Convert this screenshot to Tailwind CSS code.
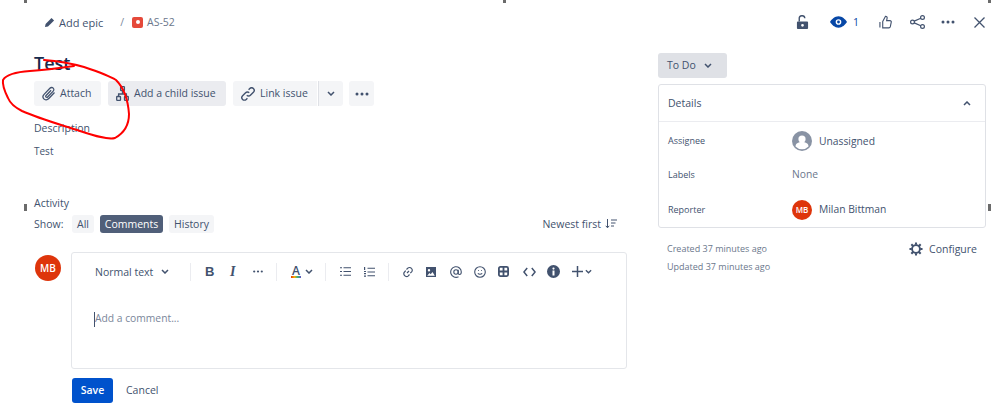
<!DOCTYPE html>
<html lang="en">
  <head>
    <meta charset="UTF-8" />
    <meta name="viewport" content="width=device-width, initial-scale=1.0" />
    <title>AS-52</title>
    <script src="https://cdn.jsdelivr.net/npm/@tailwindcss/browser@4"></script>
  </head>
  <body class="bg-white">
    <div class="relative w-[991px] h-[412px] overflow-hidden bg-white font-['Open_Sans',sans-serif] text-[10.5px] text-[#42526e]">
      <!-- header -->
      <div class="flex items-center h-[44px] pl-[45px] pr-[6px]">
        <svg class="w-[10px] h-[10px] text-[#42526e]" viewBox="0 0 10 10" fill="currentColor"><path d="M0 10l.6-3L6.500 1l2.600 2.500L3 9.400z"/></svg>
        <span class="ml-[4px] pt-[2px] text-[11px] font-medium">Add epic</span>
        <span class="ml-[17px] pt-[2px] text-[#7a869a]">/</span>
        <span class="ml-[8px] flex items-center justify-center w-[11px] h-[11px] rounded-[2px] bg-[#e5493a]"><span class="w-[4px] h-[4px] rounded-full bg-white"></span></span>
        <span class="ml-[4px] pt-[2px] text-[#6b778c]">AS-52</span>
        <div class="ml-auto flex items-center">
          <svg class="w-[13px] h-[15px] mr-[21px] text-[#42526e]" viewBox="0 0 14 16" fill="currentColor"><path d="M2 7h10a1 1 0 0 1 1 1v6a1 1 0 0 1-1 1H2a1 1 0 0 1-1-1V8a1 1 0 0 1 1-1zm5 2.500a1.500 1.500 0 1 0 0 3 1.500 1.500 0 0 0 0-3z" fill-rule="evenodd"/><path d="M3.500 7V4a3 3 0 0 1 6-.6" fill="none" stroke="currentColor" stroke-width="1.500"/></svg>
          <svg class="w-[17px] h-[12px] mr-[6px] text-[#0747a6]" viewBox="0 0 18 12" fill="currentColor"><path fill-rule="evenodd" d="M9 0c4 0 7 3 9 6-2 3-5 6-9 6S2 9 0 6c2-3 5-6 9-6zm0 3a3 3 0 1 0 0 6 3 3 0 0 0 0-6zm0 1.500a1.500 1.500 0 1 1 0 3 1.500 1.500 0 0 1 0-3z"/></svg>
          <span class="w-[26px] pt-[2px] text-[#0747a6]">1</span>
          <svg class="w-[13px] h-[14px] mr-[18px] text-[#42526e]" viewBox="0 0 14 14" fill="none" stroke="currentColor" stroke-width="1.200"><path d="M1 7v6M4 6.500 7 .8c1.300 0 2 .9 1.700 2.200L8.200 5.500h3.600c1 0 1.600.8 1.400 1.700l-1 4.800c-.2.800-.8 1.300-1.600 1.300H4z"/></svg>
          <svg class="w-[15px] h-[14px] mr-[16px] text-[#42526e]" viewBox="0 0 15 14" fill="none" stroke="currentColor" stroke-width="1.200"><circle cx="2.500" cy="7" r="1.900"/><circle cx="12.500" cy="2.500" r="1.900"/><circle cx="12.500" cy="11.500" r="1.900"/><path d="M4.200 6.100l6.600-2.900M4.200 7.900l6.600 2.900"/></svg>
          <svg class="w-[14px] h-[4px] mr-[19px] text-[#42526e]" viewBox="0 0 14 4" fill="currentColor"><circle cx="2" cy="2" r="1.500"/><circle cx="7" cy="2" r="1.500"/><circle cx="12" cy="2" r="1.500"/></svg>
          <svg class="w-[11px] h-[11px] text-[#42526e]" viewBox="0 0 11 11" fill="none" stroke="currentColor" stroke-width="1.300"><path d="M.5.500l10 10M10.500.500l-10 10"/></svg>
        </div>
      </div>

      <div class="flex">
        <!-- left column -->
        <div class="w-[658px] shrink-0 pl-[34px] pr-[31px]">
          <h1 class="mt-[7px] h-[24px] leading-[24px] text-[18px] font-semibold text-[#172b4d]">Test</h1>
          <div class="mt-[6px] flex h-[25px] font-medium">
            <div class="flex items-center w-[67px] rounded-[3px] bg-[#f4f5f7] pl-[8px]">
              <svg class="w-[14px] h-[15px] text-[#42526e]" viewBox="0 0 14 15" fill="none" stroke="currentColor" stroke-width="1.300"><path d="M12.500 6.500 6.800 12.500c-1.500 1.600-3.800 1.700-5 .4s-1-3.300.5-4.800l5.600-5.800c1-1 2.400-1.100 3.300-.2s.8 2.300-.2 3.300L5.600 11c-.5.500-1.200.5-1.600.1s-.4-1.100.1-1.600l5-5.200"/></svg>
              <span class="ml-[4px]">Attach</span>
            </div>
            <div class="ml-[7px] flex items-center w-[118px] rounded-[3px] bg-[#ebecf0] pl-[8px]">
              <svg class="w-[13px] h-[15px] text-[#42526e]" viewBox="0 0 13 15" fill="none" stroke="currentColor" stroke-width="1.300"><rect x="4.600" y=".7" width="3.800" height="3.800" rx=".6"/><rect x=".7" y="10.500" width="3.800" height="3.800" rx=".6"/><rect x="8.500" y="10.500" width="3.800" height="3.800" rx=".6"/><path d="M6.500 4.500v3.500M2.600 10.500V8h7.800v2.500"/></svg>
              <span class="ml-[5px]">Add a child issue</span>
            </div>
            <div class="ml-[7px] flex items-center w-[84px] rounded-l-[3px] bg-[#f4f5f7] pl-[8px]">
              <svg class="w-[14px] h-[14px] text-[#42526e]" viewBox="0 0 14 14" fill="none" stroke="currentColor" stroke-width="1.400"><path d="M5.800 8.200a2.500 2.500 0 0 0 3.600 0l3-3a2.500 2.500 0 0 0-3.600-3.600L7.600 2.800"/><path d="M8.200 5.800a2.500 2.500 0 0 0-3.600 0l-3 3a2.500 2.500 0 0 0 3.600 3.600l1.200-1.200"/></svg>
              <span class="ml-[5px]">Link issue</span>
            </div>
            <div class="ml-[1px] flex items-center justify-center w-[25px] rounded-r-[3px] bg-[#f4f5f7] border-l border-[#dfe1e6]">
              <svg class="w-[8px] h-[5px] text-[#42526e]" viewBox="0 0 8 5" fill="none" stroke="currentColor" stroke-width="1.500"><path d="M1 1l3 3 3-3"/></svg>
            </div>
            <div class="ml-[6px] flex items-center justify-center w-[25px] rounded-[3px] bg-[#f4f5f7]">
              <svg class="w-[14px] h-[4px] text-[#42526e]" viewBox="0 0 14 4" fill="currentColor"><circle cx="2" cy="2" r="1.500"/><circle cx="7" cy="2" r="1.500"/><circle cx="12" cy="2" r="1.500"/></svg>
            </div>
          </div>
          <div class="mt-[14px] h-[16px] leading-[16px] font-medium">Description</div>
          <div class="mt-[7px] h-[15px] leading-[16px] text-[10px] text-[#42526e]">Test</div>

          <div class="mt-[37px] h-[16px] leading-[16px] font-medium">Activity</div>
          <div class="mt-[4px] flex items-center h-[18px]">
            <span class="w-[38px] pt-[2px]">Show:</span>
            <span class="flex items-center justify-center w-[22px] h-[18px] pt-[2px] rounded-[3px] bg-[#f4f5f7] font-medium">All</span>
            <span class="ml-[6px] flex items-center justify-center w-[63px] h-[18px] pt-[2px] rounded-[3px] bg-[#505f79] text-white font-medium">Comments</span>
            <span class="ml-[6px] flex items-center justify-center w-[45px] h-[18px] pt-[2px] rounded-[3px] bg-[#f4f5f7] font-medium">History</span>
            <span class="ml-auto pt-[2px] font-medium">Newest first</span>
            <svg class="ml-[4px] mr-[10px] w-[12px] h-[10px] text-[#42526e]" viewBox="0 0 12 10" fill="none" stroke="currentColor" stroke-width="1"><path d="M2.500 0v8.500M.8 6.800l1.700 2 1.700-2M6 1h6M6 4h4.500M6 7h3"/></svg>
          </div>

          <div class="mt-[19px] flex">
            <div class="flex items-center justify-center w-[26px] h-[26px] ml-[1px] mt-[3px] rounded-full bg-[#de350b] text-white text-[10px] font-semibold">MB</div>
            <div class="ml-[10px] w-[556px] h-[117px] rounded-[3px] border border-[#e4e6ea]">
              <div class="flex items-center h-[37px] pl-[23px] text-[#42526e]">
                <span class="w-[60px] pt-[2px] font-medium whitespace-nowrap">Normal text</span>
                <svg class="ml-[6px] w-[8px] h-[5px] shrink-0" viewBox="0 0 8 5" fill="none" stroke="currentColor" stroke-width="1.500"><path d="M1 1l3 3 3-3"/></svg>
                <span class="ml-[21px] w-px h-[18px] bg-[#ebecf0]"></span>
                <span class="ml-[14px] w-[9px] text-[13px] leading-none font-bold font-['Liberation_Sans',sans-serif]">B</span>
                <span class="ml-[16px] w-[7px] text-[14px] leading-none font-bold italic font-['Liberation_Serif',serif]">I</span>
                <svg class="ml-[16px] w-[10px] h-[3px]" viewBox="0 0 10 3" fill="currentColor"><circle cx="1.200" cy="1.500" r="1.100"/><circle cx="5" cy="1.500" r="1.100"/><circle cx="8.800" cy="1.500" r="1.100"/></svg>
                <span class="ml-[13px] w-px h-[18px] bg-[#ebecf0]"></span>
                <span class="ml-[14px] flex flex-col items-center w-[10px]">
                  <span class="text-[12px] leading-[11px] font-semibold">A</span>
                  <span class="block w-[10px] h-[2px] bg-[linear-gradient(90deg,#de350b,#ffab00,#36b37e,#6554c0)]"></span>
                </span>
                <svg class="ml-[4px] w-[8px] h-[5px]" viewBox="0 0 8 5" fill="none" stroke="currentColor" stroke-width="1.500"><path d="M1 1l3 3 3-3"/></svg>
                <span class="ml-[12px] w-px h-[18px] bg-[#ebecf0]"></span>
                <svg class="ml-[14px] w-[11px] h-[9px]" viewBox="0 0 11 9" fill="currentColor"><path d="M0 .2h2v1.100H0zM3.500 .2H11v1.100H3.500zM0 3.900h2V5H0zM3.500 3.900H11V5H3.500zM0 7.700h2v1.100H0zM3.500 7.700H11v1.100H3.500z"/></svg>
                <svg class="ml-[13px] w-[11px] h-[10px]" viewBox="0 0 11 10" fill="currentColor"><path d="M0 0h1.200v3H0zM0 4h2v1H0zM0 6h2v1.200H0zM0 8.500h2v1.200H0zM3.500.7H11v1.100H3.500zM3.500 4.400H11v1.100H3.500zM3.500 8.200H11v1.100H3.500z"/></svg>
                <span class="ml-[13px] w-px h-[18px] bg-[#ebecf0]"></span>
                <svg class="ml-[13px] w-[12px] h-[12px]" viewBox="0 0 12 12" fill="none" stroke="currentColor" stroke-width="1.200"><path d="M5 7l2-2M7.500 8.500 6.300 9.800a2.400 2.400 0 0 1-3.700-.3 2.400 2.400 0 0 1-.1-3.500l1.200-1.300M4.500 3.500l1.300-1.300a2.400 2.400 0 0 1 3.600.2 2.400 2.400 0 0 1 .2 3.500L8.300 7.200"/></svg>
                <svg class="ml-[12px] w-[10px] h-[10px]" viewBox="0 0 10 10" fill="currentColor"><path fill-rule="evenodd" d="M0 0h10v10H0zm1.200 8.800h7.600L6.500 5 4.700 7.300 3.500 6zM3 2a1.200 1.200 0 1 0 0 2.400A1.200 1.200 0 0 0 3 2z"/></svg>
                <svg class="ml-[14px] w-[12px] h-[12px]" viewBox="0 0 12 12" fill="none" stroke="currentColor" stroke-width="1.100"><circle cx="6" cy="6" r="2.200"/><path d="M8.200 3.800V7c0 1 .6 1.500 1.300 1.500s1.800-.8 1.800-2.500A5.300 5.300 0 1 0 8.500 10.700"/></svg>
                <svg class="ml-[12px] w-[12px] h-[12px]" viewBox="0 0 12 12" fill="none" stroke="currentColor" stroke-width="1.100"><circle cx="6" cy="6" r="5.300"/><path d="M3.800 7.400c1.200 1.200 3.200 1.200 4.400 0M4 4.500h.8M7.200 4.500H8"/></svg>
                <svg class="ml-[12px] w-[11px] h-[11px]" viewBox="0 0 11 11" fill="none" stroke="currentColor" stroke-width="1.800"><rect x=".9" y=".9" width="9.200" height="9.200" rx="1.500"/><path d="M5.500 1v9M1 5.500h9"/></svg>
                <svg class="ml-[14px] w-[13px] h-[10px]" viewBox="0 0 13 10" fill="none" stroke="currentColor" stroke-width="1.500"><path d="M4.200 1 .9 5l3.300 4M8.800 1l3.300 4-3.300 4"/></svg>
                <svg class="ml-[11px] w-[13px] h-[13px]" viewBox="0 0 13 13" fill="currentColor"><path fill-rule="evenodd" d="M6.500 0a6.500 6.500 0 1 1 0 13 6.500 6.500 0 0 1 0-13zM5.500 5.500v5h2v-5zm1-3a1.100 1.100 0 1 0 0 2.200 1.100 1.100 0 0 0 0-2.200z"/></svg>
                <svg class="ml-[12px] w-[11px] h-[11px]" viewBox="0 0 11 11" fill="none" stroke="currentColor" stroke-width="1.500"><path d="M5.500 0v11M0 5.500h11"/></svg>
                <svg class="ml-[2px] w-[7px] h-[5px]" viewBox="0 0 8 5" fill="none" stroke="currentColor" stroke-width="1.500"><path d="M1 1l3 3 3-3"/></svg>
              </div>
              <div class="mt-[21px] ml-[22px] flex items-center h-[16px] text-[10.300px]">
                <span class="w-px h-[15px] bg-[#42526e]"></span>
                <span class="text-[#7a869a]">Add a comment...</span>
              </div>
            </div>
          </div>
          <div class="mt-[9px] ml-[38px] flex items-center h-[25px]">
            <span class="flex items-center justify-center w-[41px] h-[25px] rounded-[3px] bg-[#0052cc] text-white font-semibold">Save</span>
            <span class="ml-[13px] font-medium">Cancel</span>
          </div>
        </div>

        <!-- right column -->
        <div class="w-[328px] shrink-0 pt-[9px]">
          <div class="flex items-center w-[69px] h-[25px] rounded-[3px] bg-[#dfe1e6] pl-[9px] font-medium">
            <span>To Do</span>
            <svg class="ml-[8px] w-[8px] h-[5px]" viewBox="0 0 8 5" fill="none" stroke="currentColor" stroke-width="1.500"><path d="M1 1l3 3 3-3"/></svg>
          </div>
          <div class="mt-[6px] h-[144px] rounded-[3px] border border-[#dfe1e6]">
            <div class="flex items-center justify-between h-[37px] pl-[9px] pr-[14px] border-b border-[#ebecf0] font-medium">
              <span class="pt-[2px]">Details</span>
              <svg class="w-[8px] h-[5px]" viewBox="0 0 8 5" fill="none" stroke="currentColor" stroke-width="1.500"><path d="M1 4l3-3 3 3"/></svg>
            </div>
            <div class="flex items-center h-[34px] mt-[2px] pl-[9px] text-[9px] font-medium">
              <span class="w-[124px]">Assignee</span>
              <svg class="w-[20px] h-[20px] text-[#8993a4]" viewBox="0 0 20 20"><circle cx="10" cy="10" r="10" fill="currentColor"/><circle cx="10" cy="8" r="3.600" fill="#fff"/><path d="M3.500 15.500c0-3 2.500-4.500 6.500-4.500s6.500 1.500 6.500 4.500a9 9 0 0 1-13 0z" fill="#fff"/></svg>
              <span class="ml-[7px] pt-[2px] text-[10.300px] font-normal">Unassigned</span>
            </div>
            <div class="flex items-center h-[33px] pl-[9px] text-[9px] font-medium">
              <span class="w-[124px]">Labels</span>
              <span class="text-[10.300px] font-normal text-[#6b778c]">None</span>
            </div>
            <div class="flex items-center h-[37px] pl-[9px] text-[9px] font-medium">
              <span class="w-[124px]">Reporter</span>
              <span class="flex items-center justify-center w-[20px] h-[20px] rounded-full bg-[#de350b] text-white text-[8px] font-semibold">MB</span>
              <span class="ml-[7px] text-[10.300px] font-normal">Milan Bittman</span>
            </div>
          </div>
          <div class="mt-[12px] flex justify-between pl-[9px] pr-[9px]">
            <div class="text-[9px] leading-[18px] text-[#6b778c]">
              <div>Created 37 minutes ago</div>
              <div>Updated 37 minutes ago</div>
            </div>
            <div class="flex items-center h-[18px] font-medium">
              <svg class="w-[14px] h-[14px] text-[#42526e]" viewBox="0 0 15 15" fill="none" stroke="currentColor"><circle cx="7.500" cy="7.500" r="4.200" stroke-width="2"/><path stroke-width="2.200" d="M7.500.5v2.500M7.500 12v2.500M.5 7.500H3M12 7.500h2.500M2.500 2.500l1.800 1.800M10.700 10.700l1.800 1.800M12.500 2.500l-1.800 1.800M4.300 10.700l-1.800 1.800"/></svg>
              <span class="ml-[6px] pt-[2px]">Configure</span>
            </div>
          </div>
        </div>
      </div>

      <!-- red annotation drawn over the page -->
      <svg class="absolute left-0 top-0 w-[991px] h-[412px] pointer-events-none" viewBox="0 0 991 412" fill="none" stroke="#ff0000" stroke-width="2" stroke-linecap="round"><path d="M44 60C58 61 70 63 84 67C96 71 108 75 116 80C124 88 128 100 129 114C129 124 124 133 115 138C108 140 95 136 80 131C62 125 40 119 22 111C14 107 10 103 8 98C5 92 2 86 3 80C6 75 15 72 30 71C45 70 60 68 74 66"/></svg>

      <!-- screenshot selection handles -->
      <span class="absolute left-[24px] top-0 w-[3px] h-[3px] bg-[#6b6b6b]"></span>
      <span class="absolute left-[503px] top-0 w-[3px] h-[3px] bg-[#6b6b6b]"></span>
      <span class="absolute left-[988px] top-0 w-[3px] h-[3px] bg-[#6b6b6b]"></span>
      <span class="absolute left-[24px] top-[204px] w-[3px] h-[7px] bg-[#6b6b6b]"></span>
      <span class="absolute left-[988px] top-[204px] w-[3px] h-[7px] bg-[#6b6b6b]"></span>
    </div>
  </body>
</html>
